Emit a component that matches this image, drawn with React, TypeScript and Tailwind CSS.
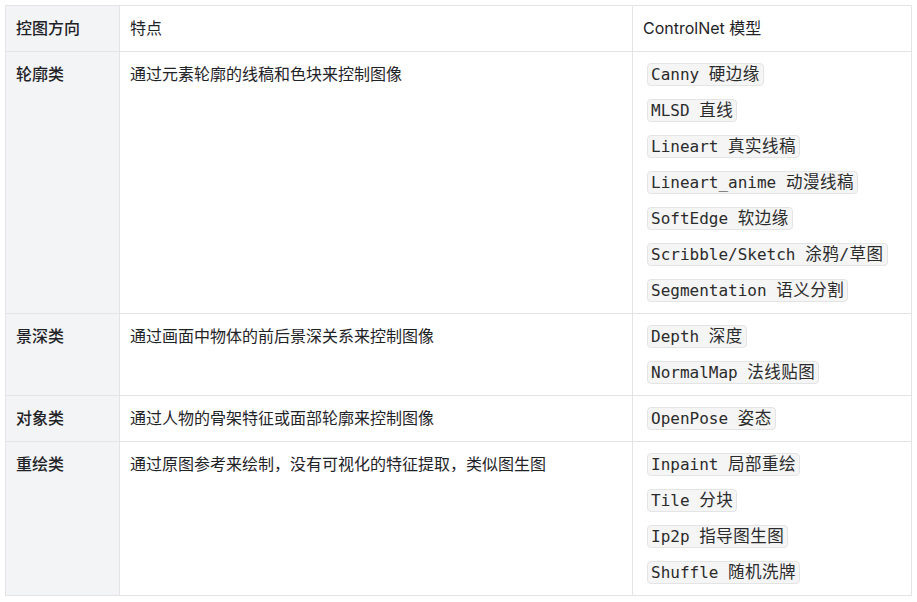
const rows = [
  {
    kind: '轮廓类',
    desc: '通过元素轮廓的线稿和色块来控制图像',
    models: ['Canny 硬边缘', 'MLSD 直线', 'Lineart 真实线稿', 'Lineart_anime 动漫线稿', 'SoftEdge 软边缘', 'Scribble/Sketch 涂鸦/草图', 'Segmentation 语义分割'],
  },
  {
    kind: '景深类',
    desc: '通过画面中物体的前后景深关系来控制图像',
    models: ['Depth 深度', 'NormalMap 法线贴图'],
  },
  {
    kind: '对象类',
    desc: '通过人物的骨架特征或面部轮廓来控制图像',
    models: ['OpenPose 姿态'],
  },
  {
    kind: '重绘类',
    desc: '通过原图参考来绘制，没有可视化的特征提取，类似图生图',
    models: ['Inpaint 局部重绘', 'Tile 分块', 'Ip2p 指导图生图', 'Shuffle 随机洗牌'],
  },
];

// latin part in mono, chinese label a touch larger like the source
function Chip({ text }: { text: string }) {
  const i = text.indexOf(' ');
  const en = text.slice(0, i);
  const zh = text.slice(i + 1);
  return (
    <code className="inline-flex h-[23px] items-center whitespace-pre rounded-[4px] border border-[#e3e4e6] bg-[#f5f5f6] px-[3px] font-['DejaVu_Sans_Mono','Noto_Sans_CJK_SC',monospace] text-[16px] leading-[21px] text-[#2b2b2b]">
      <span>{en} </span>
      <span className="text-[16.5px] leading-[21px] tracking-[0.5px]">{zh}</span>
    </code>
  );
}

export default function App() {
  return (
    <div className="min-h-[602px] w-[917px] bg-white p-[5px] font-['Inter','Noto_Sans_CJK_SC',sans-serif] text-[16px] text-[#1f2328]">
      <table className="w-[907px] table-fixed border-collapse border border-[#e4e4e6]">
        <colgroup>
          <col className="w-[114px]" />
          <col className="w-[513px]" />
          <col />
        </colgroup>
        <thead>
          <tr>
            <th className="border border-[#e4e4e6] bg-[#f3f4f6] px-[10px] py-[11px] text-left font-medium leading-[23px]">
              控图方向
            </th>
            <th className="border border-[#e4e4e6] px-[10px] py-[11px] text-left font-normal leading-[23px]">特点</th>
            <th className="border border-[#e4e4e6] px-[10px] py-[11px] text-left font-normal leading-[23px]">ControlNet 模型</th>
          </tr>
        </thead>
        <tbody>
          {rows.map((r) => (
            <tr key={r.kind}>
              <td className="border border-[#e4e4e6] bg-[#f3f4f6] px-[10px] py-[11px] align-top font-medium leading-[23px]">
                {r.kind}
              </td>
              <td className="border border-[#e4e4e6] px-[10px] py-[11px] align-top leading-[23px]">{r.desc}</td>
              <td className="border border-[#e4e4e6] px-[10px] py-[11px] align-top">
                <div className="flex flex-col items-start gap-[13px] pl-[4px]">
                  {r.models.map((m) => (
                    <Chip key={m} text={m} />
                  ))}
                </div>
              </td>
            </tr>
          ))}
        </tbody>
      </table>
    </div>
  );
}
